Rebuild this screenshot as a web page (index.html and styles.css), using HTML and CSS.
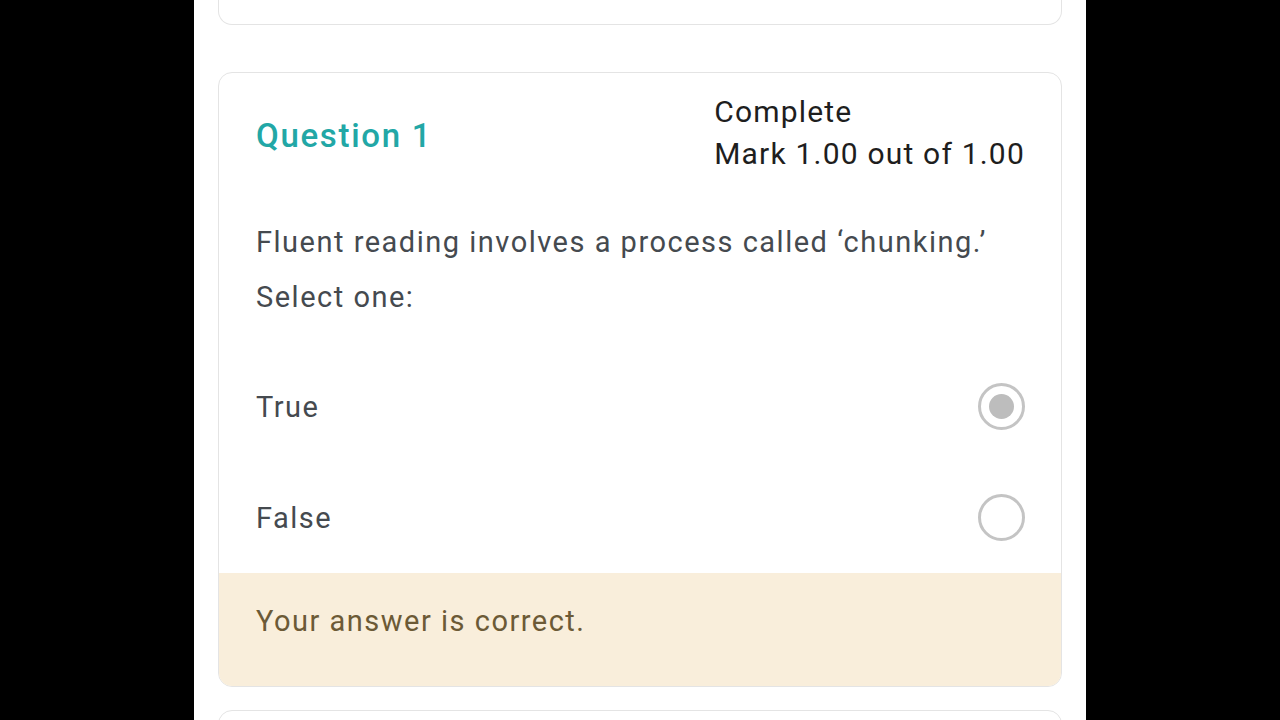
FILE: index.html
```html
<!DOCTYPE html>
<html lang="en">
  <head>
    <meta charset="UTF-8" />
    <meta name="viewport" content="width=device-width, initial-scale=1.0" />
    <title>Quiz review</title>
    <link rel="stylesheet" href="styles.css">
  </head>
  <body>
    <div class="page">
      <div class="card prev"></div>

      <div class="card question">
        <div class="head">
          <h2 class="qno">Question 1</h2>
          <div class="info">
            <div>Complete</div>
            <div>Mark 1.00 out of 1.00</div>
          </div>
        </div>
        <div class="qtext">
          <p>Fluent reading involves a process called ‘chunking.’</p>
          <p class="prompt">Select one:</p>
        </div>
        <div class="answers">
          <label class="answer">
            <span>True</span>
            <span class="radio checked"></span>
          </label>
          <label class="answer">
            <span>False</span>
            <span class="radio"></span>
          </label>
        </div>
        <div class="feedback">Your answer is correct.</div>
      </div>

      <div class="card next"></div>
    </div>
  </body>
</html>
```

FILE: styles.css
```css
html, body {
  margin: 0;
  height: 100%;
  overflow: hidden;
}

body {
  background-color: #000;
  font-family: Roboto, "Noto Sans", Arial, sans-serif;
}

.page {
  width: 844px;
  margin: 0 auto;
  padding: 0 24px;
  height: 720px;
  background-color: #fff;
  overflow: hidden;
}

.card {
  border: 1px solid #e4e4e4;
  border-radius: 14px;
  background-color: #fff;
}

.prev {
  height: 60px;
  margin-top: -36px;
  border-top: none;
  border-top-left-radius: 0;
  border-top-right-radius: 0;
}

.question {
  margin-top: 47px;
  overflow: hidden;
}

.next {
  margin-top: 23px;
  height: 60px;
}

.head {
  display: flex;
  justify-content: space-between;
  align-items: flex-start;
  padding: 18px 36px 0 37px;
}

.qno {
  margin: 24px 0 0 0;
  font-size: 33px;
  font-weight: 500;
  line-height: 42px;
  letter-spacing: 1.7px;
  color: #22a7a6;
}

.info {
  font-size: 30px;
  line-height: 42px;
  letter-spacing: 1.2px;
  color: #1e1e1e;
}

.qtext {
  padding: 46px 37px 0 37px;
  font-size: 29px;
  line-height: 42px;
  letter-spacing: 1.5px;
  color: #454a4f;
}

.qtext p {
  margin: 0;
}

.qtext .prompt {
  margin-top: 13px;
}

.answers {
  margin-top: 33px;
}

.answer {
  display: flex;
  align-items: center;
  justify-content: space-between;
  height: 111px;
  padding: 0 36px 0 37px;
  font-size: 29px;
  letter-spacing: 1.5px;
  color: #454a4f;
}

.radio {
  width: 41px;
  height: 41px;
  border: 3px solid #c4c4c4;
  border-radius: 50%;
  display: flex;
  align-items: center;
  justify-content: center;
}

.radio.checked::after {
  content: "";
  width: 25px;
  height: 25px;
  border-radius: 50%;
  background-color: #bdbdbd;
}

.feedback {
  background-color: #f9eedb;
  padding: 27px 37px 44px 37px;
  font-size: 29px;
  line-height: 42px;
  letter-spacing: 1.5px;
  color: #6c5a36;
}
```
